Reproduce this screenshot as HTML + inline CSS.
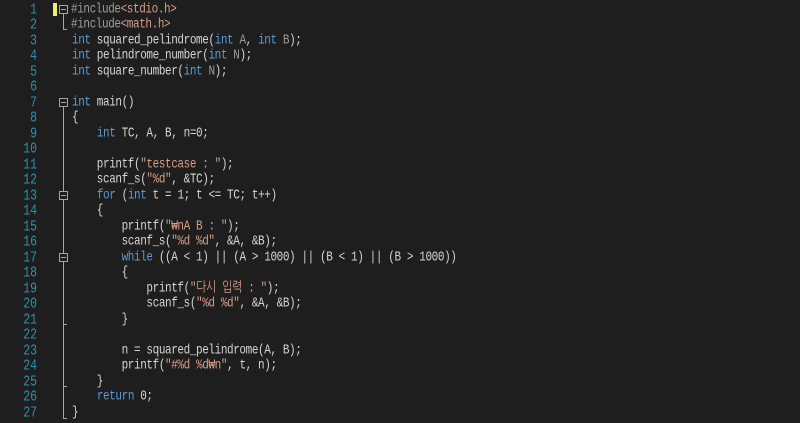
<!DOCTYPE html><html><head><style>
body{margin:0;width:800px;height:422px;background:#1e1e1e;overflow:hidden;position:relative;font-family:"Liberation Mono","NanumGothic",monospace;font-size:11px;letter-spacing:-0.4px}
.ln,.c{line-height:15.5px;height:15.5px;transform:scaleY(1.25);transform-origin:50% 50%}
.ln{position:absolute;left:0;width:37px;text-align:right;color:#2b91af;letter-spacing:0;font-size:11.5px}
.c{position:absolute;left:72px;color:#d4d4d4;white-space:pre}
.k{color:#569cd6}.s{color:#d69d85}.p{color:#9b9b9b}
.fb{position:absolute;left:59px;width:7px;height:7px;border:1px solid #a5a5a5;background:#1e1e1e}
.fb:after{content:"";position:absolute;left:1px;top:3px;width:5px;height:1px;background:#a5a5a5}
.v{position:absolute;left:63px;width:1px;background:#a5a5a5}
.h{position:absolute;left:63px;width:4px;height:1px;background:#a5a5a5}
</style></head><body>
<div style="position:absolute;left:53px;top:3px;width:4px;height:13px;background:#f0f06a"></div>
<div id="n"></div>
<div class="v" style="top:13px;height:17px"></div><div class="h" style="top:29px"></div>
<div class="v" style="top:106px;height:313px"></div><div class="h" style="top:418px"></div>
<div class="h" style="top:324px"></div><div class="h" style="top:386px"></div>
<div class="fb" style="top:5px"></div>
<div class="fb" style="top:98px"></div>
<div class="fb" style="top:191px"></div>
<div class="fb" style="top:253px"></div>
<script>
var L=[
'<span class="p">#include</span><span class="s">&lt;stdio.h&gt;</span>',
'<span class="p">#include</span><span class="s">&lt;math.h&gt;</span>',
'<span class="k">int</span> squared_pelindrome(<span class="k">int</span> <span class="p">A</span>, <span class="k">int</span> <span class="p">B</span>);',
'<span class="k">int</span> pelindrome_number(<span class="k">int</span> <span class="p">N</span>);',
'<span class="k">int</span> square_number(<span class="k">int</span> <span class="p">N</span>);',
'',
'<span class="k">int</span> main()',
'{',
'    <span class="k">int</span> TC, A, B, n=0;',
'',
'    printf(<span class="s">"testcase : "</span>);',
'    scanf_s(<span class="s">"%d"</span>, &amp;TC);',
'    <span class="k">for</span> (<span class="k">int</span> t = 1; t &lt;= TC; t++)',
'    {',
'        printf(<span class="s">"₩nA B : "</span>);',
'        scanf_s(<span class="s">"%d %d"</span>, &amp;A, &amp;B);',
'        <span class="k">while</span> ((A &lt; 1) || (A &gt; 1000) || (B &lt; 1) || (B &gt; 1000))',
'        {',
'            printf(<span class="s">"다시 입력 : "</span>);',
'            scanf_s(<span class="s">"%d %d"</span>, &amp;A, &amp;B);',
'        }',
'',
'        n = squared_pelindrome(A, B);',
'        printf(<span class="s">"#%d %d₩n"</span>, t, n);',
'    }',
'    <span class="k">return</span> 0;',
'}'];
var h='';for(var i=0;i<L.length;i++){var t=2.8+i*15.5;h+='<div class="ln" style="top:'+t+'px">'+(i+1)+'</div><div class="c" style="top:'+t+'px;left:'+(i<2?71:72)+'px">'+L[i]+'</div>';}
document.getElementById('n').innerHTML=h;
</script>
</body></html>
